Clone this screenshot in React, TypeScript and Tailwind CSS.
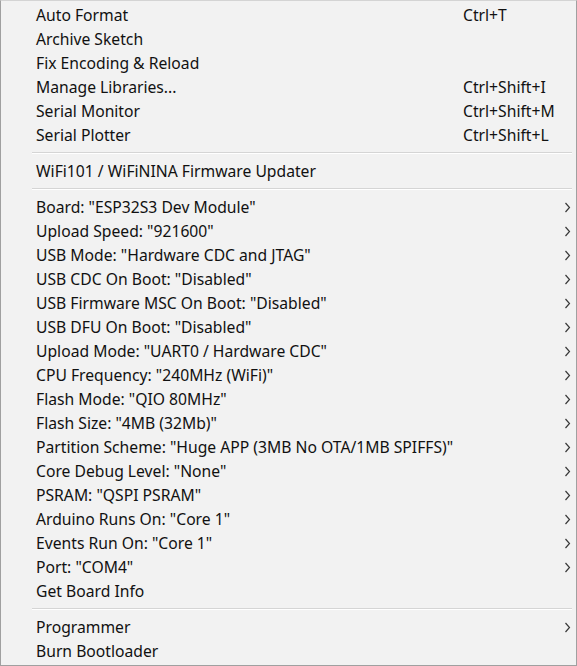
import React from 'react';

type Item =
  | { type: 'item'; label: string; shortcut?: string; sub?: boolean }
  | { type: 'sep' };

const items: Item[] = [
  { type: 'item', label: 'Auto Format', shortcut: 'Ctrl+T' },
  { type: 'item', label: 'Archive Sketch' },
  { type: 'item', label: 'Fix Encoding & Reload' },
  { type: 'item', label: 'Manage Libraries...', shortcut: 'Ctrl+Shift+I' },
  { type: 'item', label: 'Serial Monitor', shortcut: 'Ctrl+Shift+M' },
  { type: 'item', label: 'Serial Plotter', shortcut: 'Ctrl+Shift+L' },
  { type: 'sep' },
  { type: 'item', label: 'WiFi101 / WiFiNINA Firmware Updater' },
  { type: 'sep' },
  { type: 'item', label: 'Board: "ESP32S3 Dev Module"', sub: true },
  { type: 'item', label: 'Upload Speed: "921600"', sub: true },
  { type: 'item', label: 'USB Mode: "Hardware CDC and JTAG"', sub: true },
  { type: 'item', label: 'USB CDC On Boot: "Disabled"', sub: true },
  { type: 'item', label: 'USB Firmware MSC On Boot: "Disabled"', sub: true },
  { type: 'item', label: 'USB DFU On Boot: "Disabled"', sub: true },
  { type: 'item', label: 'Upload Mode: "UART0 / Hardware CDC"', sub: true },
  { type: 'item', label: 'CPU Frequency: "240MHz (WiFi)"', sub: true },
  { type: 'item', label: 'Flash Mode: "QIO 80MHz"', sub: true },
  { type: 'item', label: 'Flash Size: "4MB (32Mb)"', sub: true },
  { type: 'item', label: 'Partition Scheme: "Huge APP (3MB No OTA/1MB SPIFFS)"', sub: true },
  { type: 'item', label: 'Core Debug Level: "None"', sub: true },
  { type: 'item', label: 'PSRAM: "QSPI PSRAM"', sub: true },
  { type: 'item', label: 'Arduino Runs On: "Core 1"', sub: true },
  { type: 'item', label: 'Events Run On: "Core 1"', sub: true },
  { type: 'item', label: 'Port: "COM4"', sub: true },
  { type: 'item', label: 'Get Board Info' },
  { type: 'sep' },
  { type: 'item', label: 'Programmer', sub: true },
  { type: 'item', label: 'Burn Bootloader' },
];

const Chevron = () => (
  <svg width="7" height="11" viewBox="0 0 7 11" fill="none" className="-mt-[2px]">
    <path d="M1.5 1 L5.5 5.5 L1.5 10" stroke="#3a3a3a" strokeWidth="1.2" />
  </svg>
);

export default function App() {
  return (
    <div
      className="w-[577px] h-[666px] bg-[#f2f2f2] border border-[#a0a0a0] border-t-[#d4d4d4] pt-[2px] text-[15.7px] text-[#111] overflow-hidden"
      style={{ fontFamily: '"Noto Sans", "Noto Sans CJK SC", sans-serif' }}
    >
      {items.map((it, i) =>
        it.type === 'sep' ? (
          <div key={i} className="h-3 flex flex-col justify-center pl-[31px] pr-[4px]">
            <div className="h-px bg-[#d5d5d5]" />
            <div className="h-px bg-white" />
          </div>
        ) : (
          <div key={i} className="h-6 flex items-center pt-[2px] pl-[35px] pr-[5px] leading-none">
            <span className="w-[427px] shrink-0 whitespace-nowrap">{it.label}</span>
            <span className="flex-1 whitespace-nowrap">{it.shortcut}</span>
            {it.sub && <Chevron />}
          </div>
        )
      )}
    </div>
  );
}
